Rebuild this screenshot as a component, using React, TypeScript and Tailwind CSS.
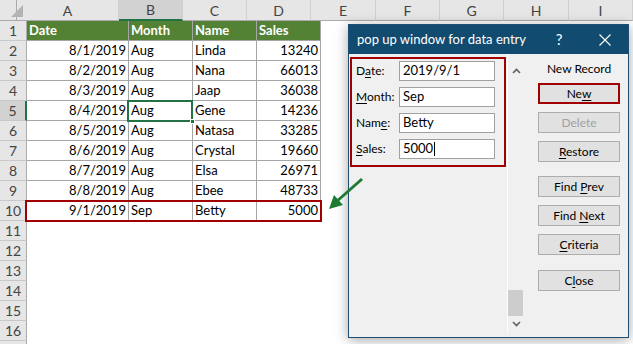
import React from 'react'

const COLS = [
  { key: 'A', w: 'w-[102px]' },
  { key: 'B', w: 'w-[64px]' },
  { key: 'C', w: 'w-[64px]' },
  { key: 'D', w: 'w-[64px]' },
  { key: 'E', w: 'w-[65px]' },
  { key: 'F', w: 'w-[64px]' },
  { key: 'G', w: 'w-[64px]' },
  { key: 'H', w: 'w-[65px]' },
  { key: 'I', w: 'w-[64px]' },
]

const DATA = [
  ['8/1/2019', 'Aug', 'Linda', '13240'],
  ['8/2/2019', 'Aug', 'Nana', '66013'],
  ['8/3/2019', 'Aug', 'Jaap', '36038'],
  ['8/4/2019', 'Aug', 'Gene', '14236'],
  ['8/5/2019', 'Aug', 'Natasa', '33285'],
  ['8/6/2019', 'Aug', 'Crystal', '19660'],
  ['8/7/2019', 'Aug', 'Elsa', '26971'],
  ['8/8/2019', 'Aug', 'Ebee', '48733'],
  ['9/1/2019', 'Sep', 'Betty', '5000'],
]

const FIELDS = [
  { pre: 'D', u: 'a', post: 'te:', value: '2019/9/1' },
  { pre: '', u: 'M', post: 'onth:', value: 'Sep' },
  { pre: 'Nam', u: 'e', post: ':', value: 'Betty' },
  { pre: '', u: 'S', post: 'ales:', value: '5000', caret: true },
]

function U({ pre, u, post }: { pre: string; u: string; post: string }) {
  return (
    <span>
      {pre}
      <span className="underline underline-offset-2">{u}</span>
      {post}
    </span>
  )
}

function DlgButton({ pre, u, post, mt, red, disabled }: { pre: string; u: string; post: string; mt: string; red?: boolean; disabled?: boolean }) {
  return (
    <div
      className={`${mt} flex h-[21px] w-[82px] items-center justify-center bg-[#e1e1e1] text-[12px] ${red ? 'border-2 border-[#a00000]' : 'border border-[#adadad]'} ${disabled ? 'text-[#a0a0a0]' : 'text-black'}`}
    >
      {disabled ? `${pre}${u}${post}` : <U pre={pre} u={u} post={post} />}
    </div>
  )
}

function Sheet() {
  const rows = Array.from({ length: 17 }, (_, i) => i + 1)
  return (
    <div className="flex flex-col">
      {/* column headers */}
      <div className="flex h-[21px] text-[14px] text-[#444]">
        <div className="relative w-[27px] border-r border-b border-[#ababab] bg-[#e6e6e6]">
          <svg className="absolute left-[11px] top-[5px]" width="12" height="12" viewBox="0 0 12 12">
            <polygon points="12,0 12,12 0,12" fill="#b4b4b4" />
          </svg>
        </div>
        {COLS.map(c => (
          <div
            key={c.key}
            className={`${c.w} flex shrink-0 items-center justify-center border-r ${c.key === 'B' ? 'border-b-2 border-b-[#217346] bg-[#d2d2d2]' : 'border-b border-b-[#ababab] bg-[#e6e6e6]'} border-r-[#d0d0d0]`}
          >
            {c.key}
          </div>
        ))}
      </div>

      {rows.map(r => {
        const inTable = r <= 10
        const cells = r === 1 ? ['Date', 'Month', 'Name', 'Sales'] : r <= 10 ? DATA[r - 2] : []
        return (
          <div key={r} className="flex h-[20px] text-[13px]">
            <div
              className={`flex w-[27px] shrink-0 items-center justify-center border-b border-b-[#c8c8c8] text-[14px] text-[#444] ${r === 5 ? 'border-r-2 border-r-[#217346] bg-[#d2d2d2]' : 'border-r border-r-[#ababab] bg-[#e6e6e6]'}`}
            >
              {r < 17 ? r : ''}
            </div>
            {COLS.map((c, ci) => {
              const table = inTable && ci < 4
              const text = table ? cells[ci] : ''
              const right = r > 1 && (ci === 0 || ci === 3)
              return (
                <div
                  key={c.key}
                  className={`${c.w} flex shrink-0 items-center overflow-hidden whitespace-nowrap border-r border-b px-[2px] ${table ? 'border-[#a6a6a6]' : 'border-white'} ${right ? 'justify-end' : 'justify-start'} ${table && r === 1 ? 'bg-[#548235] font-bold text-white' : 'text-black'}`}
                >
                  {text}
                </div>
              )
            })}
          </div>
        )
      })}
    </div>
  )
}

function Dialog() {
  return (
    <div className="absolute left-[348px] top-[24px] flex h-[314px] w-[281px] flex-col border border-[#1d4e75] bg-[#f0f0f0] shadow-[0_2px_12px_rgba(0,0,0,0.35)]">
      <div className="flex h-[29px] shrink-0 items-center bg-[#124b70] text-white">
        <div className="flex-1 pl-[8px] text-[13px]">pop up window for data entry</div>
        <div className="flex w-[46px] items-center justify-center text-[15px]">?</div>
        <div className="flex w-[46px] items-center justify-center">
          <svg width="12" height="12" viewBox="0 0 12 12">
            <path d="M0.5 0.5 L11.5 11.5 M11.5 0.5 L0.5 11.5" stroke="white" strokeWidth="1.1" />
          </svg>
        </div>
      </div>

      <div className="flex flex-1">
        {/* fields */}
        <div className="w-[158px] shrink-0 pl-[1px] pt-[3px]">
          <div className="flex w-[156px] flex-col gap-[6px] border-2 border-[#a00000] pt-[2px] pr-[9px] pb-[6px] pl-[4px] text-[12px] text-black">
            {FIELDS.map(f => (
              <div key={f.value} className="flex h-[20px] items-center">
                <div className="w-[43px]">
                  <U pre={f.pre} u={f.u} post={f.post} />
                </div>
                <div className="flex h-[20px] w-[96px] items-center border border-[#a0a0a0] bg-white pl-[3px] text-[13px]">
                  {f.value}
                  {f.caret && <span className="ml-[1px] h-[14px] w-px bg-black" />}
                </div>
              </div>
            ))}
          </div>
        </div>

        {/* scrollbar */}
        <div className="flex w-[17px] shrink-0 flex-col pb-[5px]">
          <div className="flex flex-1 flex-col border-l border-white">
            <div className="flex h-[34px] items-center justify-center">
              <svg width="9" height="6" viewBox="0 0 9 6">
                <path d="M1 5 L4.5 1.5 L8 5" stroke="#606060" strokeWidth="1.6" fill="none" />
              </svg>
            </div>
            <div className="flex flex-1 flex-col justify-end">
              <div className="h-[26px] w-[15px] bg-[#cdcdcd]" />
            </div>
            <div className="flex h-[16px] items-center justify-center">
              <svg width="9" height="6" viewBox="0 0 9 6">
                <path d="M1 1 L4.5 4.5 L8 1" stroke="#606060" strokeWidth="1.6" fill="none" />
              </svg>
            </div>
          </div>
        </div>

        {/* buttons */}
        <div className="flex flex-1 flex-col pl-[14px] pt-[7px]">
          <div className="w-[82px] text-center text-[12px] leading-[16px] text-black">New Record</div>
          <DlgButton pre="Ne" u="w" post="" mt="mt-[6px]" red />
          <DlgButton pre="" u="D" post="elete" mt="mt-[8px]" disabled />
          <DlgButton pre="" u="R" post="estore" mt="mt-[8px]" />
          <DlgButton pre="Find " u="P" post="rev" mt="mt-[14px]" />
          <DlgButton pre="Find " u="N" post="ext" mt="mt-[8px]" />
          <DlgButton pre="" u="C" post="riteria" mt="mt-[8px]" />
          <DlgButton pre="C" u="l" post="ose" mt="mt-[15px]" />
        </div>
      </div>
    </div>
  )
}

export default function App() {
  return (
    <div className="relative h-[344px] w-[633px] overflow-hidden bg-white font-['Lato',sans-serif]">
      <Sheet />

      {/* active cell B5 */}
      <div className="absolute left-[127px] top-[100px] h-[22px] w-[66px] border-2 border-[#217346]" />
      <div className="absolute left-[190px] top-[119px] h-[5px] w-[5px] border border-white bg-[#217346]" />

      {/* new record row highlight */}
      <div className="absolute left-[25px] top-[200px] h-[22px] w-[297px] border-2 border-[#a00000]" />

      <Dialog />

      {/* arrow, drawn over the dialog */}
      <svg className="absolute left-[324px] top-[174px]" width="44" height="40" viewBox="0 0 44 40">
        <line x1="38" y1="5" x2="12" y2="28" stroke="#1f7a32" strokeWidth="3" />
        <polygon points="5,35 10,21 19,31" fill="#1f7a32" />
      </svg>
    </div>
  )
}
